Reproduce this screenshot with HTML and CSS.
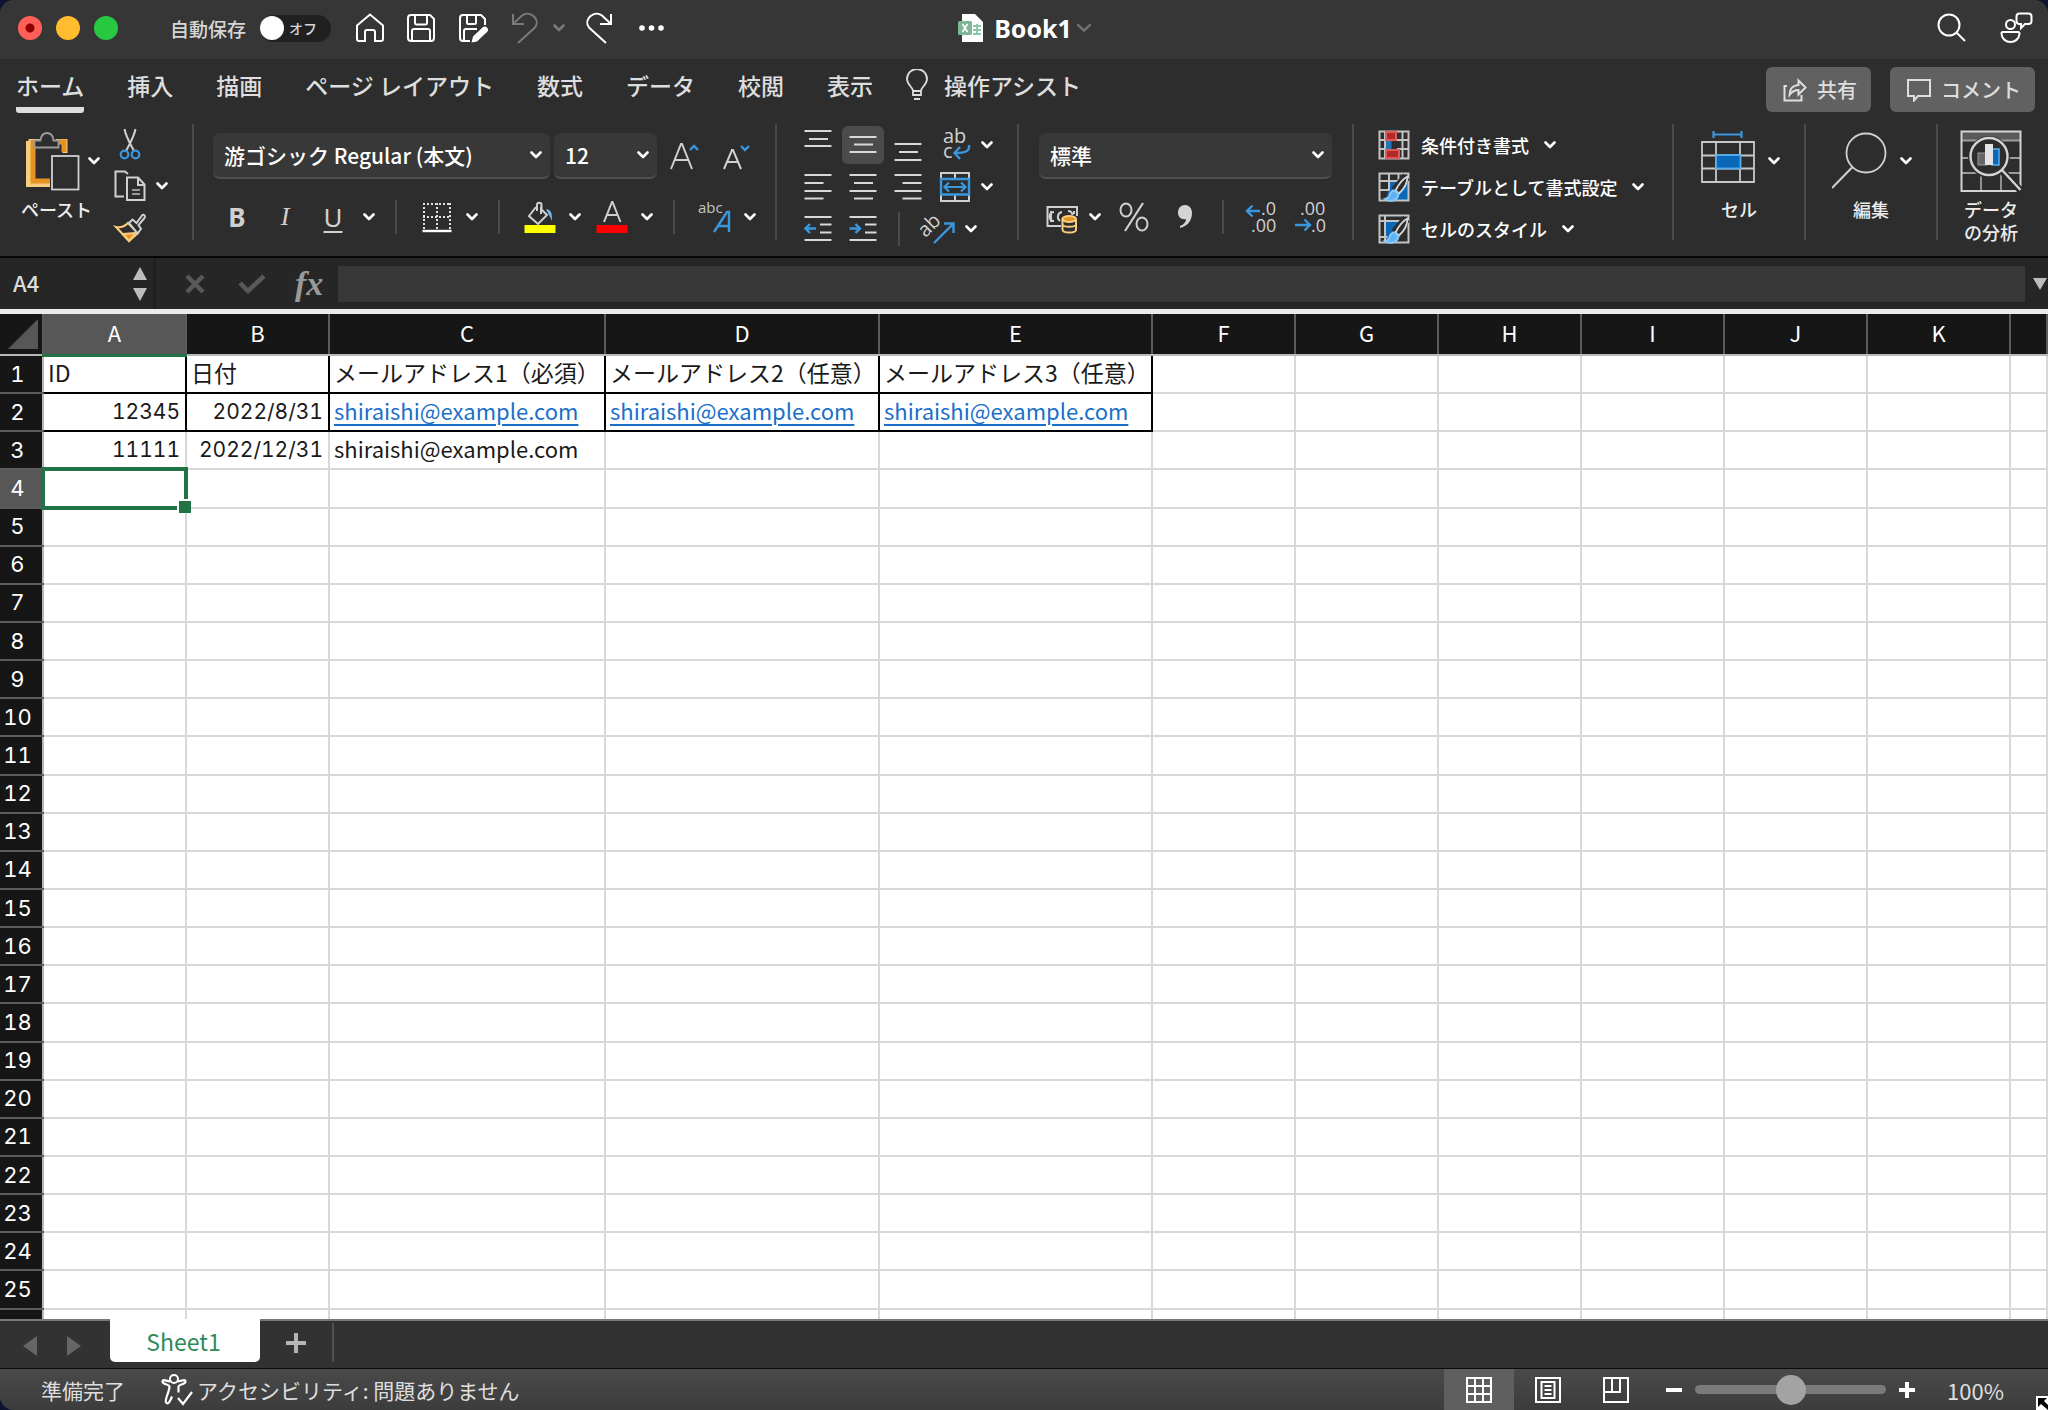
FILE: index.html
```
<!DOCTYPE html>
<html lang="ja">
<head>
    <meta charset="UTF-8">
    <meta name="viewport" content="width=device-width, initial-scale=1.0">
    <title>Book1</title>
    <link rel="stylesheet" href="styles.css">
</head>
<body>
    <!-- Shared icons -->
    <svg class="sprite" aria-hidden="true">
        <symbol id="chev" viewBox="0 0 12 8"><path d="M1.5 1.5 6 6l4.5-4.5" fill="none" stroke="currentColor" stroke-width="2.6" stroke-linecap="round" stroke-linejoin="round"/></symbol>
        <symbol id="brush" viewBox="0 0 32 32">
            <path d="M30 7 20 21M27 4 15 18" fill="none" stroke="#2d2d2d" stroke-width="4"/>
            <path d="M29.5 5.5c-4 2-9 8-12 14l3.500 3c5-4.500 8.500-10.500 8.500-17z" fill="#2d2d2d" stroke="#d8d8d8" stroke-width="1.800"/>
            <path d="M17 19.500c-4 0-5 2.500-5.500 5-.5 2-2 3-4.500 3.500 4 3 12.500 2.500 13.500-5z" fill="#5eb2f2" stroke="#8cc8f5"/>
        </symbol>
    </svg>

    <div class="window">
        <!-- Title bar -->
        <header class="titlebar">
            <div class="title-left">
                <div class="lights">
                    <button class="light red" aria-label="閉じる"></button>
                    <button class="light yellow" aria-label="しまう"></button>
                    <button class="light green" aria-label="拡大"></button>
                </div>
                <label class="autosave">自動保存
                    <span class="toggle"><input type="checkbox"><span>オフ</span></span>
                </label>
                <div class="quick">
                    <button aria-label="ホーム"><svg class="ic32" viewBox="0 0 32 32"><path d="M3 13.500 16 2.500l13 11V27a2 2 0 0 1-2 2h-6v-9a2 2 0 0 0-2-2h-6a2 2 0 0 0-2 2v9H5a2 2 0 0 1-2-2z"/></svg></button>
                    <button aria-label="保存"><svg class="ic32" viewBox="0 0 32 32"><path d="M3 6a3 3 0 0 1 3-3h19l4 4v19a3 3 0 0 1-3 3H6a3 3 0 0 1-3-3zM10 3v8a1.500 1.500 0 0 0 1.500 1.500h9A1.500 1.500 0 0 0 22 11V3M7 29V19a2 2 0 0 1 2-2h14a2 2 0 0 1 2 2v10"/></svg></button>
                    <button aria-label="編集して保存"><svg class="ic32" viewBox="0 0 32 32"><path d="M14 29H7a3 3 0 0 1-3-3V6a3 3 0 0 1 3-3h18l4 4v6M11 3v7.500a1.500 1.500 0 0 0 1.500 1.500h6a1.500 1.500 0 0 0 1.500-1.500V3M8 29V19a2 2 0 0 1 2-2h11"/><path d="M15.500 30.500l1.500-6L26.500 15.500a3 3 0 0 1 4.500 4.500L21 29.500z" fill="#fff"/></svg></button>
                    <button class="dim" aria-label="元に戻す"><svg class="ic32" viewBox="0 0 32 32"><path d="M6 2v10h11M6 12l9-8.500c8-6 19 4 13 12L11 31"/></svg></button>
                </div>
                <button class="dim undo-more" aria-label="元に戻すの一覧"><svg class="chev"><use href="#chev"/></svg></button>
                <button class="redo" aria-label="やり直し"><svg class="ic32" viewBox="0 0 32 32"><path d="M28 2v10H17M28 12l-9-8.500C11-2.500 0 7.500 6 15.500L23 31"/></svg></button>
                <button class="more" aria-label="その他"><svg class="ic32" viewBox="0 0 32 32"><g fill="#fff" stroke="none"><circle cx="6" cy="16" r="2.800"/><circle cx="15.500" cy="16" r="2.800"/><circle cx="25" cy="16" r="2.800"/></g></svg></button>
            </div>
            <div class="doc">
                <svg class="doc-icon" viewBox="0 0 26 28"><path d="M4 0h13l8 8v20H4z" fill="#fff"/><path d="M15 12h8M15 16h8M15 20h8M19 10v10" stroke="#86c6a4" stroke-width="1.800"/><rect x="0" y="7" width="14" height="14" rx="1.500" fill="#7fb795"/><path d="M4.500 10l5 8M9.500 10l-5 8" stroke="#fff" stroke-width="1.600"/></svg>
                <h1>Book1</h1>
                <svg class="doc-chev" viewBox="0 0 16 10"><path d="M2 2l6 5.500L14 2" fill="none" stroke="#707070" stroke-width="2.400" stroke-linecap="round"/></svg>
            </div>
            <div class="title-right">
                <button aria-label="検索"><svg class="ic32" viewBox="0 0 32 32"><circle cx="13" cy="13" r="10.500"/><path d="M20.500 20.500 29 29"/></svg></button>
                <button aria-label="共同編集"><svg class="ic32" viewBox="0 0 32 32"><circle cx="10.500" cy="12.500" r="4.500"/><path d="M3 20h15a1.800 1.800 0 0 1 1.500 2c-.5 5-4.500 8-9 8s-8.500-3-9-8A1.800 1.800 0 0 1 3 20zM19.500 1.500h9a3 3 0 0 1 3 3v4.500a3 3 0 0 1-3 3h-3.500l-4 4v-4h-1.500a3 3 0 0 1-3-3V4.500a3 3 0 0 1 3-3z"/></svg></button>
            </div>
        </header>

        <!-- Tabs -->
        <nav class="tabs">
            <button class="tab active">ホーム</button>
            <button class="tab">挿入</button>
            <button class="tab">描画</button>
            <button class="tab">ページ レイアウト</button>
            <button class="tab">数式</button>
            <button class="tab">データ</button>
            <button class="tab">校閲</button>
            <button class="tab">表示</button>
            <button class="tab assist"><svg viewBox="0 0 22 32"><path d="M7 22c0-4-6-6-6-12a10 10 0 0 1 20 0c0 6-6 8-6 12v4H7zM7 22h8M8 30h6" fill="none" stroke="#dcdcdc" stroke-width="1.800"/></svg>操作アシスト</button>
            <div class="tab-actions">
                <button class="pill"><svg viewBox="0 0 24 24"><path d="M4 8H1.500v14.500h17V17M6.500 17c0-6 3-9.500 9-10V2.500l7 7-7 7V12c-4 0-6.500 1.500-9 5z"/></svg>共有</button>
                <button class="pill"><svg viewBox="0 0 24 24"><path d="M1 2h22v16H11l-4 4.500V18H1z"/></svg>コメント</button>
            </div>
        </nav>

        <!-- Ribbon -->
        <div class="ribbon">
            <div class="group paste-group">
                <div class="big">
                    <div class="big-row">
                        <button aria-label="ペースト"><svg width="54" height="60" viewBox="0 0 54 60"><path d="M2.500 10.500h12M30 10.500h9V22M2.500 10v43.500H24" fill="none" stroke="#f7cd7d" stroke-width="5"/><path d="M7 9v41h17M32 11h6v10" fill="none" stroke="#e59423" stroke-width="5"/><path d="M8.500 16.500v-7h6C15 4.500 17.500 2 21 2s6 2.500 6.500 7.500h5v7z" fill="#2d2d2d" stroke="#9a9a9a" stroke-width="1.800"/><rect x="26" y="25" width="26.500" height="33.500" fill="#2d2d2d" stroke="#d0d0d0" stroke-width="1.800"/></svg></button>
                        <button class="arrow" aria-label="ペーストの一覧"><svg class="chev"><use href="#chev"/></svg></button>
                    </div>
                    <span class="big-label">ペースト</span>
                </div>
                <div class="clip">
                    <button class="tool" aria-label="カット"><svg class="ic32" viewBox="0 0 32 32"><path d="M10.500 1c1.500 8 5 13 9.500 22M21.500 1c-1.500 8-5 13-9.500 22" stroke="#d0d0d0"/><g stroke="#3b97dd" stroke-width="2.200"><circle cx="10.500" cy="26.500" r="3.800"/><circle cx="21.500" cy="26.500" r="3.800"/></g></svg></button>
                    <div class="line">
                        <button class="tool" aria-label="コピー"><svg class="ic32" viewBox="0 0 32 32"><path d="M10 26.500H1.500v-25H11L14 4M13 7.500h11l6.500 7v15.500H13zM24 8v7h6" stroke="#d0d0d0"/><path d="M18 20h8M18 24h8" stroke="#9a9a9a"/></svg></button>
                        <button class="arrow" aria-label="コピーの一覧"><svg class="chev"><use href="#chev"/></svg></button>
                    </div>
                    <button class="tool" aria-label="書式のコピー"><svg class="ic32" viewBox="0 0 32 32"><path d="M2 15c5 1 9-1 12-4l10 10-9 8z" fill="#2d2d2d" stroke="#f7cd7d" stroke-width="2.200"/><path d="M9 22l13-1-7 8z" fill="#e59423" stroke="#f7cd7d"/><path d="M15 11l3.500-3.500 4 3.500L28 3.500c1.500-1.800 4 .5 2.500 2.500L24.500 13l2.500 4-3.500 4.500z" fill="#2d2d2d" stroke="#d0d0d0"/></svg></button>
                </div>
            </div>

            <div class="group font-group">
                <div class="line combos">
                    <div class="combo grow">
                        <select aria-label="フォント"><option>游ゴシック Regular (本文)</option></select>
                        <svg class="chev"><use href="#chev"/></svg>
                    </div>
                    <div class="combo size">
                        <select aria-label="フォント サイズ"><option>12</option></select>
                        <svg class="chev"><use href="#chev"/></svg>
                    </div>
                    <button class="tool resize" aria-label="フォント サイズの拡大"><svg class="ic32" viewBox="0 0 32 32"><path d="M2 29 12 4h1l10 25M6 20h13" stroke="#d0d0d0"/><path d="M21 10l4-4 4 4" stroke="#3b97dd" stroke-width="2.400"/></svg></button>
                    <button class="tool resize" aria-label="フォント サイズの縮小"><svg class="ic32" viewBox="0 0 32 32"><path d="M3 29 11 10h1l8 19M6 22h11" stroke="#d0d0d0"/><path d="M20 6l4 4 4-4" stroke="#3b97dd" stroke-width="2.400"/></svg></button>
                </div>
                <div class="line font-tools">
                    <button class="glyph bold" aria-label="太字">B</button>
                    <button class="glyph italic" aria-label="斜体">I</button>
                    <button class="glyph under" aria-label="下線">U</button>
                    <button class="arrow" aria-label="下線の一覧"><svg class="chev"><use href="#chev"/></svg></button>
                    <span class="sep"></span>
                    <button class="tool" aria-label="罫線"><svg class="ic32" viewBox="0 0 32 32"><path d="M2 3h28M2 16h28M3 2v26M16 2v26M29 2v26" stroke="#e0e0e0" stroke-dasharray="2 2"/><path d="M1.500 30h29" stroke="#fff" stroke-width="2.400"/></svg></button>
                    <button class="arrow gap6" aria-label="罫線の一覧"><svg class="chev"><use href="#chev"/></svg></button>
                    <span class="sep"></span>
                    <button class="tool" aria-label="塗りつぶしの色"><svg class="ic32" viewBox="0 0 32 32"><path d="M12 6 5 15l9 8 9-9-6-6v5M13 10V4a2.200 2.200 0 0 1 4.500 0v4" stroke="#d0d0d0"/><path d="M22 8c6 1 6 5 6 12-2-5-3-6-4-8z" fill="#7ab8ea"/><path d="M.5 24h31v8H.5z" fill="#ff0"/></svg></button>
                    <button class="arrow gap6" aria-label="塗りつぶしの一覧"><svg class="chev"><use href="#chev"/></svg></button>
                    <button class="tool gap8" aria-label="フォントの色"><svg class="ic32" viewBox="0 0 32 32"><path d="M8 21 16 1h.5l8 20M11 14h11" stroke="#d0d0d0"/><path d="M.5 24h31v8H.5z" fill="#f00"/></svg></button>
                    <button class="arrow gap6" aria-label="フォントの色の一覧"><svg class="chev"><use href="#chev"/></svg></button>
                    <span class="sep"></span>
                    <button class="tool abc" aria-label="ふりがな"><svg class="ic32" viewBox="0 0 32 32"><text x="-1" y="12" font-size="15" fill="#c4c4c4">abc</text><path d="M15 31 28 11h2v20M19 25h11" stroke="#3b97dd" stroke-width="2.400"/></svg></button>
                    <button class="arrow gap6" aria-label="ふりがなの一覧"><svg class="chev"><use href="#chev"/></svg></button>
                </div>
            </div>

            <div class="group align-group">
                <div class="line">
                    <button class="al" aria-label="上揃え"><svg class="ic32" viewBox="0 0 32 32"><path d="M2.500 2h27M7 10h19M2.500 17h27"/></svg></button>
                    <button class="al on" aria-label="上下中央揃え"><svg class="ic32" viewBox="0 0 32 32"><path d="M2.500 8h27M7 15.500h19M2.500 23h27"/></svg></button>
                    <button class="al" aria-label="下揃え"><svg class="ic32" viewBox="0 0 32 32"><path d="M2.500 15h27M7 23h19M2.500 31h27"/></svg></button>
                    <button class="tool gap6" aria-label="折り返して全体を表示"><svg class="ic32" viewBox="0 0 32 32"><text x="4" y="14" font-size="20" fill="#d0d0d0">ab<tspan x="4" y="29">c</tspan></text><path d="M30 16c1 6-3 8-14 8M21 18l-5.500 6 5.500 6" stroke="#3b97dd" stroke-width="2.400"/></svg></button>
                    <button class="arrow" aria-label="折り返しの一覧"><svg class="chev"><use href="#chev"/></svg></button>
                </div>
                <div class="line">
                    <button class="al" aria-label="左揃え"><svg class="ic32" viewBox="0 0 32 32"><path d="M2.500 4h27M2.500 12h19M2.500 20h27M2.500 27.500h19"/></svg></button>
                    <button class="al" aria-label="中央揃え"><svg class="ic32" viewBox="0 0 32 32"><path d="M2.500 4h27M7 12h19M2.500 20h27M7 27.500h19"/></svg></button>
                    <button class="al" aria-label="右揃え"><svg class="ic32" viewBox="0 0 32 32"><path d="M2.500 4h27M10.500 12h19M2.500 20h27M10.500 27.500h19"/></svg></button>
                    <button class="tool gap6" aria-label="セルを結合"><svg class="ic32" viewBox="0 0 32 32"><path d="M2 2h28v28H2zM16 2v28" stroke="#d0d0d0"/><path d="M2 8h28v15.500H2z" fill="#2d2d2d" stroke="#3b97dd" stroke-width="2.400"/><path d="M6 16h20M10 11.500 5.500 16l4.500 4.500M22 11.500l4.500 4.500-4.500 4.500" stroke="#3b97dd" stroke-width="2.200"/></svg></button>
                    <button class="arrow" aria-label="結合の一覧"><svg class="chev"><use href="#chev"/></svg></button>
                </div>
                <div class="line">
                    <button class="al" aria-label="インデント解除"><svg class="ic32" viewBox="0 0 32 32"><path d="M2.500 4h27M18 11.500h11.500M18 19.500h11.500M2.500 27h27"/><path d="M14 15.500H3.500M8 11l-4.500 4.500L8 20" stroke="#3b97dd" stroke-width="2.400"/></svg></button>
                    <button class="al" aria-label="インデント"><svg class="ic32" viewBox="0 0 32 32"><path d="M2.500 4h27M18 11.500h11.500M18 19.500h11.500M2.500 27h27"/><path d="M2.500 15.500H13M8.500 11l4.500 4.500L8.500 20" stroke="#3b97dd" stroke-width="2.400"/></svg></button>
                    <span class="sep"></span>
                    <button class="tool" aria-label="文字列の方向"><svg class="ic32" viewBox="0 0 32 32"><text x="-1" y="21" font-size="20" fill="#d0d0d0" transform="rotate(-45 6 19)">ab</text><path d="M11 30 30 11M21 10.500h9.500V20" stroke="#3b97dd" stroke-width="2.400"/></svg></button>
                    <button class="arrow" aria-label="方向の一覧"><svg class="chev"><use href="#chev"/></svg></button>
                </div>
            </div>

            <div class="group number-group">
                <div class="combo">
                    <select aria-label="表示形式"><option>標準</option></select>
                    <svg class="chev"><use href="#chev"/></svg>
                </div>
                <div class="line number-tools">
                    <button class="tool" aria-label="通貨"><svg class="ic32" viewBox="0 0 32 32"><path d="M15 25H1.500V6H31v9" stroke="#d0d0d0"/><path d="M8 11a4.500 4.500 0 0 0 0 9M14 20a5 5 0 0 1 2-9M22 10c2 0 4 1 4.500 4M5 10v11M28 10v3" stroke="#d0d0d0"/><path d="M16.500 18v10.500c0 4 13.500 4 13.500 0V18" fill="#2d2d2d" stroke="#f7cd7d"/><ellipse cx="23.200" cy="18" rx="6.800" ry="3" fill="#e59423" stroke="#f7cd7d"/><path d="M16.500 23.500c1 3 12.500 3 13.500 0" stroke="#f7cd7d"/></svg></button>
                    <button class="arrow" aria-label="通貨の一覧"><svg class="chev"><use href="#chev"/></svg></button>
                    <button class="glyph percent" aria-label="パーセント"><svg class="ic32" viewBox="0 0 32 32"><path d="M25 2 7 30" stroke="#d0d0d0" stroke-width="2.200"/><ellipse cx="8" cy="9" rx="5.500" ry="6.500" stroke="#d0d0d0"/><ellipse cx="24" cy="23" rx="5.500" ry="6.500" stroke="#d0d0d0"/></svg></button>
                    <button class="glyph comma" aria-label="桁区切り"><svg class="ic32" viewBox="0 0 32 32"><path d="M16 4c4 0 7 3 7 8 0 7-4 13-12 15v-2c4-1.500 6-4 6-7-5 1-8-2-8-6.500C9 7 12 4 16 4z" fill="#d4d4d4"/></svg></button>
                    <span class="sep"></span>
                    <button class="tool" aria-label="小数点以下の桁数を増やす"><svg class="ic32" viewBox="0 0 32 32"><text x="16" y="14" font-size="18" fill="#d0d0d0">.0<tspan x="6" y="31">.00</tspan></text><path d="M15 10H2M7.500 4.500 2 10l5.500 5.500" stroke="#3b97dd" stroke-width="2.400"/></svg></button>
                    <button class="tool inc" aria-label="小数点以下の桁数を減らす"><svg class="ic32" viewBox="0 0 32 32"><text x="5" y="14" font-size="18" fill="#d0d0d0">.00<tspan x="16" y="31">.0</tspan></text><path d="M0 24h15M9.500 18.500 15 24l-5.500 5.500" stroke="#3b97dd" stroke-width="2.400"/></svg></button>
                </div>
            </div>

            <div class="group style-group">
                <button class="style-btn"><svg class="ic32" viewBox="0 0 32 32"><path d="M1.500 2.500h29v27h-29zM1.500 11h29M1.500 20h29M24.500 2.500v27M7 2.500v27" stroke="#c4c4c4"/><path d="M8 11h11v10H8z" fill="#2d2d2d"/><path d="M8 11h5.500v9H8z" fill="#2675b5"/><path d="M8 3h10v8H8zM8 21h13v8H8z" fill="#b02a2c" stroke="#e05a5a"/></svg>条件付き書式<svg class="chev"><use href="#chev"/></svg></button>
                <button class="style-btn"><svg class="ic32" viewBox="0 0 32 32"><path d="M12 10h18.500v19H8z" fill="#0a68b8"/><path d="M1.500 2.500h29v27h-29zM1.500 10h29M1.500 19h10M11 2.500v17M20.500 2.500V10" stroke="#c4c4c4"/><use href="#brush"/></svg>テーブルとして書式設定<svg class="chev"><use href="#chev"/></svg></button>
                <button class="style-btn"><svg class="ic32" viewBox="0 0 32 32"><path d="M7 8h20L12 26H7z" fill="#0a68b8"/><path d="M1.500 2.500h29v27h-29zM1.500 8h29M7 2.500v27M1.500 24h8M26 2.500V10" stroke="#c4c4c4"/><use href="#brush"/></svg>セルのスタイル<svg class="chev"><use href="#chev"/></svg></button>
            </div>

            <div class="group big-group">
                <div class="big">
                    <div class="big-row">
                        <button aria-label="セル"><svg width="56" height="64" viewBox="0 0 56 64"><path d="M2 13h52v40H2zM16 13v40M40 13v40M2 26.500h52M2 39.500h52" fill="none" stroke="#c8c8c8" stroke-width="1.800"/><rect x="16" y="26" width="24.500" height="13.500" fill="#0a68b8" stroke="#5aaeee" stroke-width="1.800"/><path d="M13.500 5.500h28M13.500 2v7M41.500 2v7" stroke="#3b97dd" stroke-width="2.200"/></svg></button>
                        <button class="arrow" aria-label="セルの一覧"><svg class="chev"><use href="#chev"/></svg></button>
                    </div>
                    <span class="big-label">セル</span>
                </div>
            </div>
            <div class="group big-group">
                <div class="big">
                    <div class="big-row">
                        <button aria-label="編集"><svg width="56" height="64" viewBox="0 0 56 64"><circle cx="34" cy="24" r="19.500" fill="none" stroke="#d0d0d0" stroke-width="1.800"/><path d="M20 38.500 0 59" stroke="#d0d0d0" stroke-width="2"/></svg></button>
                        <button class="arrow" aria-label="編集の一覧"><svg class="chev"><use href="#chev"/></svg></button>
                    </div>
                    <span class="big-label">編集</span>
                </div>
            </div>
            <div class="group analyze">
                <button class="big">
                    <span class="big-row"><svg width="62" height="64" viewBox="0 0 62 64"><path d="M1.500 2.500h59v9h-59z" fill="#5a5a5a"/><path d="M1.500 11.500h59M1.500 29h59M1.500 44h59M21 44v18M41 44v18" stroke="#9c9c9c" stroke-width="1.800"/><path d="M1.500 2.500h59V62h-59z" fill="none" stroke="#d4d4d4" stroke-width="2"/><circle cx="29" cy="28" r="21" fill="#2d2d2d"/><path d="M42 42 62 63" stroke="#2d2d2d" stroke-width="7"/><rect x="18" y="24" width="9" height="12" fill="#666" stroke="#999"/><rect x="32" y="20" width="7" height="16" fill="#0a68b8" stroke="#5aaeee" stroke-width="1.500"/><path d="M25 15h8v21h-8z" fill="#e4e4e4"/><circle cx="29" cy="27.500" r="18.500" fill="none" stroke="#d4d4d4" stroke-width="2.400"/><path d="M42 41 60.500 61" stroke="#d4d4d4" stroke-width="2.400"/></svg></span>
                    <span class="big-label">データ<br>の分析</span>
                </button>
            </div>
        </div>

        <!-- Formula bar -->
        <div class="formula">
            <div class="name-box">
                <input type="text" value="A4" aria-label="名前ボックス">
                <svg width="16" height="36" viewBox="0 0 16 36"><path d="M8 1l7 13H1zM8 35l7-13H1z" fill="#bdbdbd"/></svg>
            </div>
            <button class="cancel" aria-label="キャンセル"><svg width="20" height="20" viewBox="0 0 20 20"><path d="M2 2l16 16M18 2 2 18" stroke="#595959" stroke-width="4.500"/></svg></button>
            <button class="enter" aria-label="入力"><svg width="28" height="20" viewBox="0 0 28 20"><path d="M2 9l8 8L26 2" fill="none" stroke="#595959" stroke-width="4.500"/></svg></button>
            <button class="fx" aria-label="関数の挿入">fx</button>
            <input class="formula-input" type="text" aria-label="数式バー">
            <button class="expand" aria-label="数式バーの展開"><svg width="14" height="12" viewBox="0 0 14 12"><path d="M0 0h14L7 12z" fill="#bdbdbd"/></svg></button>
        </div>

        <!-- Sheet -->
        <main class="sheet">
            <table>
                <colgroup>
                    <col class="w-head"><col class="w-std"><col class="w-std"><col class="w-c"><col class="w-d"><col class="w-e">
                    <col class="w-std"><col class="w-std"><col class="w-std"><col class="w-std"><col class="w-std"><col class="w-std"><col>
                </colgroup>
                <thead>
                    <tr>
                        <th class="corner"><svg width="30" height="30" viewBox="0 0 30 30"><path d="M30 0v30H0z" fill="#575757"/></svg></th>
                        <th class="sel">A</th><th>B</th><th>C</th><th>D</th><th>E</th><th>F</th><th>G</th><th>H</th><th>I</th><th>J</th><th>K</th><th></th>
                    </tr>
                </thead>
                <tbody id="rows">
                    <tr class="titles">
                        <th>1</th><td class="box">ID</td><td class="box">日付</td><td class="box">メールアドレス1（必須）</td><td class="box">メールアドレス2（任意）</td><td class="box">メールアドレス3（任意）</td>
                        <td></td><td></td><td></td><td></td><td></td><td></td><td></td>
                    </tr>
                    <tr>
                        <th>2</th><td class="box num">12345</td><td class="box num">2022/8/31</td>
                        <td class="box"><a href="mailto:shiraishi@example.com">shiraishi@example.com</a></td>
                        <td class="box"><a href="mailto:shiraishi@example.com">shiraishi@example.com</a></td>
                        <td class="box"><a href="mailto:shiraishi@example.com">shiraishi@example.com</a></td>
                        <td></td><td></td><td></td><td></td><td></td><td></td><td></td>
                    </tr>
                    <tr>
                        <th>3</th><td class="num">11111</td><td class="num">2022/12/31</td><td>shiraishi@example.com</td><td></td><td></td>
                        <td></td><td></td><td></td><td></td><td></td><td></td><td></td>
                    </tr>
                    <tr>
                        <th class="sel">4</th><td class="cursor"></td><td></td><td></td><td></td><td></td>
                        <td></td><td></td><td></td><td></td><td></td><td></td><td></td>
                    </tr>
                </tbody>
            </table>
        </main>

        <!-- Sheet tabs -->
        <div class="sheet-tabs">
            <button class="nav-btn" aria-label="前のシート"><svg width="14" height="20" viewBox="0 0 14 20"><path d="M14 0v20L0 10z" fill="#666"/></svg></button>
            <button class="nav-btn" aria-label="次のシート"><svg width="14" height="20" viewBox="0 0 14 20"><path d="M0 0v20l14-10z" fill="#666"/></svg></button>
            <button class="sheet-tab">Sheet1</button>
            <button class="add" aria-label="新しいシート"><svg width="20" height="20" viewBox="0 0 20 20"><path d="M10 0v20M0 10h20" stroke="#b4b4b4" stroke-width="4"/></svg></button>
        </div>

        <!-- Status bar -->
        <footer class="status">
            <span>準備完了</span>
            <button class="a11y"><svg class="ic32" viewBox="0 0 32 32"><circle cx="13" cy="5" r="4"/><path d="M9 7.500C5 7 1.500 4.500 1.500 7.500c0 3 7 3 7 5 0 5-5 13-3.500 16 2 3 4.500-2 6-6M17 7.500c4-.5 7.500-3 7.500 0 0 3-7 3-7 5v6M17 24l5 6L31 18" stroke-width="2.200"/></svg>アクセシビリティ: 問題ありません</button>
            <div class="views">
                <button class="view on" aria-label="標準"><svg width="26" height="26" viewBox="0 0 26 26"><path d="M1 1h24v24H1zM1 9h24M1 17h24M9 1v24M17 1v24"/></svg></button>
                <button class="view" aria-label="ページ レイアウト"><svg width="26" height="26" viewBox="0 0 26 26"><path d="M1 1h24v24H1zM6.500 5h13v16h-13zM9.500 9h7M9.500 13h7M9.500 17h7"/></svg></button>
                <button class="view" aria-label="改ページ プレビュー"><svg width="26" height="26" viewBox="0 0 26 26"><path d="M1 1h24v24H1zM1 15h16V1M9 1v14"/></svg></button>
            </div>
            <button class="zoom-btn" aria-label="縮小"><svg width="16" height="16" viewBox="0 0 16 16"><path d="M0 8h16" stroke="#fff" stroke-width="4"/></svg></button>
            <input class="zoom" type="range" min="0" max="100" value="50" aria-label="ズーム">
            <button class="zoom-btn" aria-label="拡大"><svg width="16" height="16" viewBox="0 0 16 16"><path d="M0 8h16M8 0v16" stroke="#fff" stroke-width="4"/></svg></button>
            <span class="percent-text">100%</span>
        </footer>
        <svg class="pointer" width="12" height="14" viewBox="0 0 12 14"><path d="M0 0h12v14H0z" fill="#fff"/><path d="M2 2h9L8 5l4 4v5L5 8l-3 3z" fill="#000"/></svg>
    </div>

    <script>
        // Fill the sheet with empty rows below the data
        const rows = document.getElementById('rows');
        for (let i = 5; i <= 26; i++) {
            const tr = document.createElement('tr');
            tr.innerHTML = '<th>' + i + '</th>' + '<td></td>'.repeat(12);
            rows.appendChild(tr);
        }
    </script>
</body>
</html>
```
FILE: styles.css
```
* {
    box-sizing: border-box;
    margin: 0;
}
body {
    background: #0e1330;
    font-family: "Noto Sans CJK JP", sans-serif;
    color: #ececec;
}
button, input, select {
    font: inherit;
    color: inherit;
    background: none;
    border: none;
    padding: 0;
}
button {
    display: flex;
    align-items: center;
    justify-content: center;
    white-space: nowrap;
}
svg {
    display: block;
    flex: none;
}
.sprite {
    position: absolute;
    width: 0;
    height: 0;
}
.ic32 {
    width: 32px;
    height: 32px;
    fill: none;
    stroke: #fff;
    stroke-width: 2;
    overflow: visible;
}
.ic32 text, .ic32 use, .ic32 path[fill]:not([stroke]) {
    stroke: none;
}
.ic32 text {
    font-family: "Open Sans", sans-serif;
}
.chev {
    width: 12px;
    height: 8px;
    color: #fff;
}
.window {
    display: flex;
    flex-direction: column;
    height: 100vh;
    background: #2d2d2d;
    border-radius: 14px;
    overflow: hidden;
}

/* Title bar */
.titlebar {
    display: grid;
    grid-template-columns: 1fr auto 1fr;
    align-items: center;
    height: 59px;
    padding-bottom: 3px;
    background: #363636;
}
.title-left, .title-right, .doc, .lights, .quick, .autosave {
    display: flex;
    align-items: center;
}
.lights {
    gap: 14px;
    padding-left: 18px;
}
.light {
    width: 24px;
    height: 24px;
    border-radius: 50%;
}
.red {
    background: radial-gradient(circle, #8f0000 0 4px, #ff5f57 5px);
}
.yellow {
    background: #febc2e;
}
.green {
    background: #28c840;
}
.autosave {
    gap: 14px;
    margin-left: 52px;
    font-size: 19px;
    font-weight: 500;
    color: #d6d6d6;
}
.toggle {
    display: flex;
    align-items: center;
    width: 71px;
    height: 27px;
    border-radius: 14px;
    background: #202020;
    font-size: 14px;
}
.toggle input {
    appearance: none;
    width: 24px;
    height: 24px;
    margin-right: 5px;
    border-radius: 50%;
    background: #fff;
}
.quick {
    gap: 19px;
    margin-left: 23px;
}
.dim {
    color: #7a7a7a;
}
.dim .ic32 {
    stroke: #7a7a7a;
}
.dim .chev {
    color: #7a7a7a;
}
.undo-more {
    width: 24px;
    margin-left: 8px;
}
.redo {
    margin-left: 12px;
}
.more {
    margin-left: 21px;
}
.doc {
    padding-left: 2px;
}
.doc-icon {
    width: 26px;
    height: 28px;
}
.doc-chev {
    width: 16px;
    height: 10px;
    margin-left: 4px;
}
.doc h1 {
    margin-left: 10px;
    font: bold 25px/30px "Noto Sans", sans-serif;
    color: #fff;
}
.title-right {
    justify-content: flex-end;
    gap: 32px;
    padding-right: 16px;
}

/* Tabs */
.tabs {
    display: flex;
    gap: 43px;
    height: 65px;
    padding: 8px 13px 0 16px;
    font-size: 23px;
    font-weight: 500;
    color: #dedede;
}
.tab {
    height: 45px;
    padding-bottom: 9px;
    line-height: 36px;
}
.active {
    height: 46px;
    padding-bottom: 4px;
    border-bottom: 6px solid #dedede;
    border-radius: 3px;
}
.assist {
    gap: 16px;
    margin-left: -10px;
}
.assist svg {
    width: 22px;
    height: 32px;
}
.tab-actions {
    display: flex;
    gap: 19px;
    margin-left: auto;
}
.pill {
    gap: 10px;
    height: 45px;
    padding: 0 14px 0 17px;
    border-radius: 6px;
    background: #616161;
    font-size: 20px;
}
.pill svg {
    width: 24px;
    height: 24px;
    fill: none;
    stroke: #dedede;
    stroke-width: 2;
}

/* Ribbon */
.ribbon {
    display: flex;
    height: 134px;
    padding-bottom: 16px;
    border-bottom: 2px solid #060606;
}
.group {
    padding: 0 20px;
    border-right: 2px solid #4a4a4a;
}
.line {
    display: flex;
    align-items: center;
}
.arrow {
    width: 24px;
    height: 34px;
}
.tool {
    width: 34px;
    height: 34px;
}
.gap6 {
    margin-left: 6px;
}
.gap8 {
    margin-left: 8px;
}
.sep {
    width: 2px;
    height: 34px;
    margin: 0 23px 0 14px;
    background: #4a4a4a;
}
.big {
    display: flex;
    flex-direction: column;
    align-items: center;
}
.big-row {
    display: flex;
    align-items: center;
    height: 74px;
}
.big-label {
    font-size: 18px;
    font-weight: 500;
    line-height: 23px;
}
.paste-group {
    display: flex;
    gap: 7px;
    width: 194px;
}
.paste-group .big {
    align-items: flex-start;
    width: 86px;
}
.paste-group .big-row {
    padding-left: 6px;
}
.paste-group .big-label {
    padding-left: 1px;
}
.clip {
    display: flex;
    flex-direction: column;
    gap: 9px;
    padding-top: 4px;
    flex: none;
}
.clip .arrow {
    margin-left: 3px;
}
.font-group {
    width: 583px;
    padding: 9px 0 0 19px;
}
.combos {
    gap: 4px;
}
.combo {
    display: grid;
    flex: none;
    align-items: center;
    height: 46px;
    border-radius: 7px;
    background: #383838;
    border-bottom: 2px solid #505050;
}
.combo select {
    grid-area: 1 / 1;
    appearance: none;
    width: 100%;
    padding: 0 11px;
    font-size: 21px;
    font-weight: 500;
    color: #fff;
}
.combo .chev {
    grid-area: 1 / 1;
    justify-self: end;
    margin-right: 8px;
    pointer-events: none;
}
.combo.grow {
    width: 337px;
}
.combo.size {
    width: 103px;
}
.resize {
    width: 48px;
}
.font-tools {
    margin-top: 21px;
}
.glyph {
    width: 48px;
    height: 34px;
    font-family: "Noto Sans", sans-serif;
    font-size: 26px;
    color: #d0d0d0;
}
.bold {
    font-weight: bold;
}
.italic {
    font-family: "Liberation Serif", serif;
    font-style: italic;
}
.under {
    text-decoration: underline;
    text-underline-offset: 4px;
    text-decoration-thickness: 2px;
}
.align-group {
    display: flex;
    flex-direction: column;
    gap: 4px;
    width: 242px;
    padding: 2px 0 0 20px;
}
.align-group .line {
    gap: 3px;
}
.align-group .ic32 {
    stroke: #d8d8d8;
}
.align-group .sep {
    margin: 0 19px 0 11px;
}
.al {
    width: 42px;
    height: 38px;
    border-radius: 6px;
}
.on {
    background: #4b4b4b;
}
.number-group {
    width: 335px;
    padding-top: 9px;
}
.number-tools {
    margin-top: 21px;
    padding-left: 6px;
}
.number-tools .arrow {
    margin-left: 4px;
}
.percent {
    width: 54px;
}
.number-tools .sep {
    margin: 0 20px 0 13px;
}
.inc {
    margin-left: 16px;
}
.style-group {
    width: 320px;
    padding: 0 24px;
}
.style-btn {
    gap: 11px;
    height: 42px;
    font-size: 18px;
    font-weight: 500;
    color: #fff;
}
.style-btn .chev {
    margin-left: 4px;
}
.big-group {
    width: 132px;
    padding: 0 0 0 26px;
}
.big-group .big {
    align-items: flex-start;
}
.big-group .big-label {
    width: 78px;
    text-align: center;
}
.big-group .arrow {
    margin-left: 6px;
}
.paste-group .big .arrow {
    margin-left: 2px;
}
.analyze {
    padding: 0 0 0 22px;
    border: none;
}

/* Formula bar */
.formula {
    display: flex;
    align-items: center;
    height: 51px;
    background: #262626;
}
.name-box {
    display: flex;
    align-items: center;
    width: 156px;
    height: 51px;
    padding: 0 5px 0 13px;
    border-right: 3px solid #1f1f1f;
}
.name-box input {
    flex: 1;
    min-width: 0;
    padding-bottom: 4px;
    font-size: 22px;
    font-weight: 500;
    color: #dcdcdc;
}
.cancel {
    margin-left: 29px;
}
.enter {
    margin-left: 33px;
}
.fx {
    margin-left: 29px;
    font: italic bold 34px/36px "Liberation Serif", serif;
    color: #9a9a9a;
}
.formula-input {
    flex: 1;
    height: 36px;
    margin-left: 15px;
    background: #383838;
}
.expand {
    width: 23px;
    padding-left: 7px;
}

/* Sheet */
.sheet {
    flex: 1;
    min-height: 0;
    overflow: hidden;
    border-top: 5px solid #ebebeb;
    background: #fff;
    color: #1a1a1a;
}
.sheet table {
    width: 100%;
    height: calc(100% + 29px);
    table-layout: fixed;
    border-collapse: collapse;
}
.w-head { width: 43px; }
.w-std { width: 143px; }
.w-c { width: 276px; }
.w-d { width: 274px; }
.w-e { width: 273px; }
.sheet tbody tr {
    height: 38px;
}
.sheet th {
    padding: 0 0 4px;
    background: #161616;
    border: 2px solid #5c5c5c;
    border-left: none;
    font-size: 22px;
    font-weight: 400;
    line-height: 28px;
    color: #fff;
}
.sheet thead th {
    height: 41px;
    border-top: none;
    border-bottom-color: #b9b9b9;
}
.sheet tbody th {
    padding-right: 7px;
    padding-bottom: 1px;
    border-right-color: #b9b9b9;
}
.sheet tbody th, .num {
    font-family: "Inter", sans-serif;
    font-variant-numeric: tabular-nums;
}
.sheet .corner {
    padding: 0;
}
.corner svg {
    margin-left: 8px;
}
.sheet th.sel {
    background: #575757;
}
.sheet thead th.sel {
    border-bottom: 3px solid #217346;
}
.sheet td {
    padding: 0 4px 4px;
    border: 2px solid #d8d8d8;
    font-size: 22px;
    line-height: 28px;
    white-space: nowrap;
    overflow: hidden;
}
.sheet td.box {
    border: 2px solid #000;
}
.sheet .titles td {
    font-size: 23px;
}
.sheet .num {
    padding-right: 5px;
    padding-bottom: 1px;
    font-size: 21px;
    text-align: right;
}
.sheet a {
    color: #1a6fc9;
    text-decoration-thickness: 2px;
    text-underline-offset: 4px;
}
.sheet td.cursor {
    position: relative;
    overflow: visible;
    outline: 4px solid #217346;
    outline-offset: -2px;
}
.cursor::after {
    content: "";
    position: absolute;
    right: -6px;
    bottom: -6px;
    width: 12px;
    height: 12px;
    background: #217346;
    border: solid #fff;
    border-width: 2px 0 0 2px;
}

/* Sheet tabs */
.sheet-tabs {
    display: flex;
    height: 50px;
    padding-left: 16px;
    border-top: 2px solid #777;
    border-bottom: 1px solid #0a0a0a;
    background: #323232;
}
.nav-btn {
    width: 44px;
    height: 49px;
    padding-right: 16px;
}
.sheet-tab {
    width: 150px;
    height: 43px;
    margin: -2px 0 0 6px;
    padding-right: 3px;
    border-radius: 0 0 5px 5px;
    background: #fff;
    font-size: 23px;
    color: #2e8b57;
}
.add {
    width: 74px;
    height: 39px;
    margin-top: 2px;
    border-right: 2px solid #505050;
}

/* Status bar */
.status {
    display: flex;
    align-items: center;
    height: 41px;
    padding: 0 41px;
    background: linear-gradient(#4a4a4a, #3c3c3c);
    font-size: 21px;
    line-height: 40px;
    color: #dedede;
}
.a11y {
    gap: 4px;
    margin-left: 36px;
}
.views {
    display: flex;
    margin-left: auto;
    margin-right: 3px;
}
.view {
    width: 68px;
    height: 41px;
}
.view.on {
    width: 70px;
    background: #5f5f5f;
}
.view svg {
    fill: none;
    stroke: #fff;
    stroke-width: 2;
}
.zoom-btn {
    margin: 0 13px;
}
.zoom {
    appearance: none;
    width: 191px;
    height: 9px;
    border-radius: 5px;
    background: #7a7a7a;
}
.zoom::-webkit-slider-thumb {
    appearance: none;
    width: 30px;
    height: 30px;
    border-radius: 50%;
    background: #a3a3a3;
}
.percent-text {
    width: 60px;
    margin-left: 19px;
    font-size: 22px;
}
.pointer {
    position: absolute;
    right: 0;
    bottom: 0;
}
```
